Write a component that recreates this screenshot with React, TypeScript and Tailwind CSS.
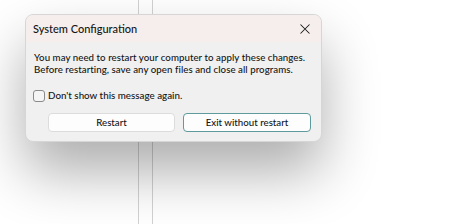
import { useState } from "react"

export default function App() {
  const [dontShow, setDontShow] = useState(false)

  return (
    <div
      className="relative h-[224px] w-[474px] overflow-hidden bg-white text-[#141414]"
      style={{ fontFamily: 'Lato, "Noto Sans", sans-serif' }}>
      {/* backdrop: the window behind the dialog */}
      <div className="flex h-full">
        <div className="w-[138px]" />
        <div className="h-full w-[15px] border-x border-[#d2d2d2]" />
      </div>

      <div className="absolute left-[25px] top-[14px] w-[297px] overflow-hidden rounded-[8px] border border-[#d6d6d6] bg-[#f0f0f0] shadow-[0_30px_56px_rgba(0,0,0,0.32)]">
        <div className="flex h-[27px] items-center justify-between bg-[#f6eeec] pl-[7px] pr-[9px]">
          <span className="whitespace-nowrap text-[11px] font-medium leading-none">System Configuration</span>
          <button type="button" className="flex h-[14px] w-[14px] items-center justify-center">
            <svg width="10" height="10" viewBox="0 0 10 10" fill="none" stroke="#1b1b1b" strokeWidth="1.05">
              <path d="M0.5 0.5 L9.5 9.5 M9.5 0.5 L0.5 9.5" />
            </svg>
          </button>
        </div>

        <div className="px-[7px] pt-[9px] pb-[9px]">
          <p className="whitespace-nowrap pl-[1px] text-[9.7px] font-medium leading-[12px] tracking-[0.05px]">
            You may need to restart your computer to apply these changes.
            <br />
            Before restarting, save any open files and close all programs.
          </p>

          <label className="mt-[15px] flex items-center gap-[3px] whitespace-nowrap text-[9.8px] font-medium leading-none">
            <input
              type="checkbox"
              checked={dontShow}
              onChange={(e) => setDontShow(e.target.checked)}
              className="h-[12px] w-[12px] appearance-none rounded-[3px] border border-[#8a8a8a] bg-[#f5f5f5]"
            />
            Don&apos;t show this message again.
          </label>

          <div className="mt-[11px] flex justify-end gap-[8px] pr-[3px]">
            <button
              type="button"
              className="h-[19px] w-[127px] rounded-[4px] border border-[#dcdcdc] bg-[#fdfdfd] text-[9.7px] font-medium leading-none">
              Restart
            </button>
            <button
              type="button"
              className="h-[19px] w-[128px] rounded-[4px] border border-[#5f9a9c] bg-[#fdfdfd] text-[9.7px] font-medium leading-none">
              Exit without restart
            </button>
          </div>
        </div>
      </div>
    </div>
  )
}
